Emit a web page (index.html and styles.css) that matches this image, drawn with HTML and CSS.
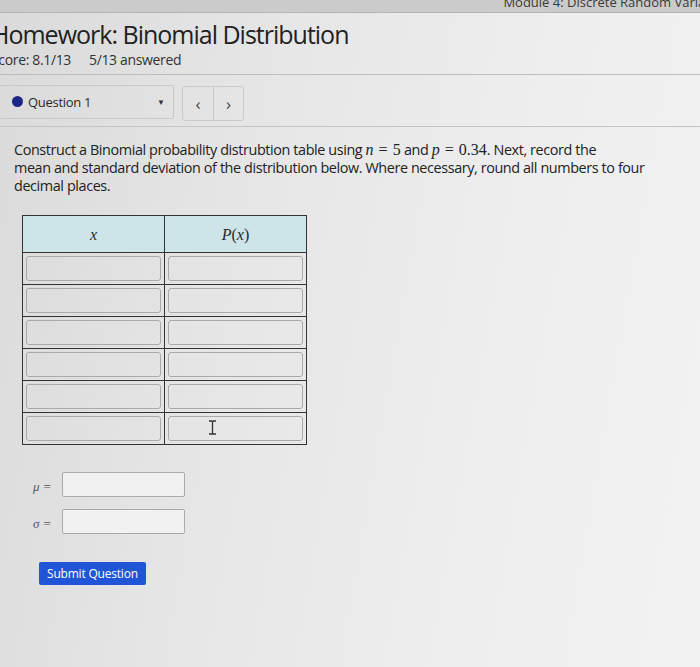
FILE: index.html
```html
<!DOCTYPE html>
<html lang="en">
<head>
    <meta charset="UTF-8">
    <meta name="viewport" content="width=device-width, initial-scale=1.0">
    <title>Homework: Binomial Distribution</title>
    <link rel="stylesheet" href="styles.css">
</head>
<body>
    <div class="topbar">
        <span class="crumb">Module 4: Discrete Random Variables</span>
    </div>

    <div class="page">
        <div class="head">
            <h1 class="title">Homework: Binomial Distribution</h1>
            <div class="score">
                <span>Score: 8.1/13</span>
                <span>5/13 answered</span>
            </div>
        </div>

        <div class="qbar">
            <div class="qselect">
                <span class="dot"></span>
                <span class="qname">Question 1</span>
                <span class="caret">&#9660;</span>
            </div>
            <div class="qnav">
                <button class="nav-btn">&lsaquo;</button>
                <button class="nav-btn">&rsaquo;</button>
            </div>
        </div>

        <div class="question">
            <p class="prompt">
                Construct a Binomial probability distrubtion table using <i class="m">n</i><span class="mo">=</span><span class="mn">5</span> and
                <i class="m">p</i><span class="mo">=</span><span class="mn">0.34</span>. Next, record the<br>
                mean and standard deviation of the distribution below. Where necessary, round all numbers to four<br>
                decimal places.
            </p>

            <table class="dist">
                <thead>
                    <tr>
                        <th><i class="m">x</i></th>
                        <th><i class="m">P</i><span class="mn">(</span><i class="m">x</i><span class="mn">)</span></th>
                    </tr>
                </thead>
                <tbody>
                    <tr><td><input type="text"></td><td><input type="text"></td></tr>
                    <tr><td><input type="text"></td><td><input type="text"></td></tr>
                    <tr><td><input type="text"></td><td><input type="text"></td></tr>
                    <tr><td><input type="text"></td><td><input type="text"></td></tr>
                    <tr><td><input type="text"></td><td><input type="text"></td></tr>
                    <tr><td><input type="text"></td><td><input type="text"></td></tr>
                </tbody>
            </table>

            <div class="stat">
                <label class="stat-label"><i class="m">&mu;</i><span class="mo">=</span></label>
                <input class="stat-input" type="text">
            </div>
            <div class="stat">
                <label class="stat-label"><i class="m">&sigma;</i><span class="mo">=</span></label>
                <input class="stat-input" type="text">
            </div>

            <button class="submit">Submit Question</button>
        </div>
    </div>

    <svg class="ibeam" width="9" height="15" viewBox="0 0 9 15">
        <path d="M1 1h2.5q1 0 1 1v11q0 1 1 1H8M1 14h2.5q1 0 1-1M4.5 2q0-1 1-1H8" fill="none" stroke="#333" stroke-width="1.3"/>
    </svg>
</body>
</html>
```

FILE: styles.css
```css
body {
    margin: 0;
    height: 667px;
    overflow: hidden;
    font-family: "Open Sans", "Liberation Sans", Arial, sans-serif;
    color: #2a2a2a;
    background: linear-gradient(100deg, #dadada 0%, #e6e6e6 35%, #eeeeee 70%, #f2f2f2 100%);
}

.topbar {
    height: 12px;
    overflow: hidden;
    display: flex;
    justify-content: flex-end;
    background-color: #cbcbcb;
    border-bottom: 1px solid #b3b3b3;
}

.crumb {
    margin-top: -7px;
    margin-right: -30px;
    font-size: 13px;
    color: #3a3a3a;
    white-space: nowrap;
}

.page {
    padding-top: 5px;
}

.head {
    margin-left: -9px;
    padding-bottom: 5px;
    border-bottom: 1px solid #bdbdbd;
}

.title {
    margin: 0;
    font-size: 25px;
    font-weight: 400;
    line-height: 32px;
    letter-spacing: -1px;
    color: #222;
}

.score {
    display: flex;
    gap: 18px;
    font-size: 14px;
    line-height: 19px;
    letter-spacing: -0.35px;
    color: #333;
}

.qbar {
    display: flex;
    align-items: center;
    gap: 8px;
    padding: 7px 0 5px;
    border-bottom: 1px solid #c4c4c4;
}

.qselect {
    display: flex;
    align-items: center;
    width: 176px;
    height: 34px;
    margin-left: -2px;
    padding: 0 8px 0 13px;
    box-sizing: border-box;
    border: 1px solid #c9c9c9;
    border-radius: 2px;
}

.dot {
    width: 11px;
    height: 11px;
    border-radius: 50%;
    background-color: #1c2687;
}

.qname {
    margin-left: 5px;
    font-size: 13px;
    letter-spacing: -0.3px;
}

.caret {
    margin-left: auto;
    font-size: 8px;
    color: #333;
}

.qnav {
    display: flex;
    margin-top: 4px;
    border: 1px solid #c9c9c9;
    border-radius: 3px;
}

.nav-btn {
    width: 30px;
    height: 33px;
    padding: 0;
    border: none;
    background: transparent;
    font-family: "Open Sans", sans-serif;
    font-size: 17px;
    color: #444;
}

.nav-btn + .nav-btn {
    border-left: 1px solid #c9c9c9;
}

.question {
    padding: 14px 0 0 14px;
}

.prompt {
    margin: 0;
    font-size: 14.4px;
    line-height: 18px;
    letter-spacing: -0.4px;
    color: #222;
    white-space: nowrap;
}

.m,
.mo,
.mn {
    font-family: "Liberation Serif", "DejaVu Serif", serif;
    font-size: 16px;
    letter-spacing: 0;
}

.mo {
    margin: 0 5px;
}

.dist {
    width: 285px;
    margin: 20px 0 0 8px;
    border-collapse: collapse;
    border: 1px solid #333;
}

.dist th {
    height: 36px;
    padding: 0;
    border: 1px solid #333;
    background-color: #cde4e8;
    font-weight: 400;
}

.dist td {
    width: 50%;
    padding: 3px;
    border: 1px solid #333;
}

.dist input {
    display: block;
    width: 100%;
    height: 25px;
    box-sizing: border-box;
    border: 1px solid #a9a9a9;
    border-radius: 3px;
    background: transparent;
}

.stat {
    display: flex;
    align-items: center;
    gap: 9px;
    margin: 27px 0 0 19px;
}

.stat + .stat {
    margin-top: 12px;
}

.stat-label {
    width: 20px;
    color: #555;
    white-space: nowrap;
}

.stat-label .m,
.stat-label .mo {
    font-size: 13px;
}

.stat-label .mo {
    margin: 0 0 0 4px;
}

.stat-input {
    width: 123px;
    height: 25px;
    box-sizing: border-box;
    border: 1px solid #aaa;
    border-radius: 2px;
    background-color: #f1f1f1;
}

.submit {
    margin: 28px 0 0 25px;
    padding: 3px 8px;
    border: none;
    border-radius: 2px;
    background-color: #1f55d6;
    color: white;
    font-family: "Open Sans", sans-serif;
    font-size: 12px;
    letter-spacing: -0.2px;
}

.ibeam {
    position: absolute;
    left: 208px;
    top: 420px;
}
```
